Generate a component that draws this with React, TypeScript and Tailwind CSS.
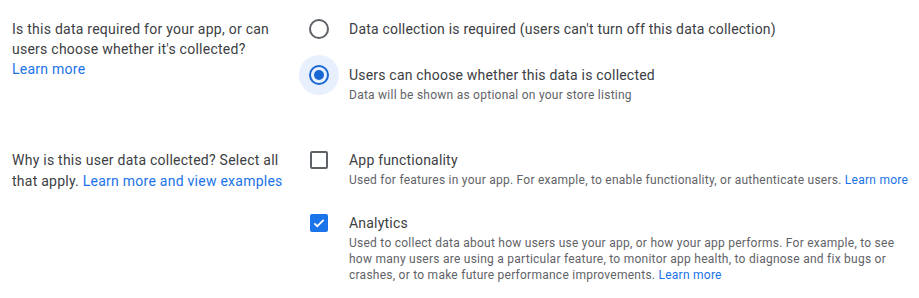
import React from "react";

function Radio({ checked }: { checked?: boolean }) {
  return (
    <div
      className={
        "w-10 h-10 shrink-0 rounded-full flex items-center justify-center " +
        (checked ? "bg-[#e8f0fe]" : "")
      }
    >
      {checked ? (
        <div className="w-5 h-5 rounded-full border-2 border-[#1967d2] flex items-center justify-center">
          <div className="w-[10px] h-[10px] rounded-full bg-[#1967d2]" />
        </div>
      ) : (
        <div className="w-5 h-5 rounded-full border-2 border-[#5f6368]" />
      )}
    </div>
  );
}

function Checkbox({ checked }: { checked?: boolean }) {
  return (
    <div className="w-10 h-10 shrink-0 flex items-center justify-center">
      {checked ? (
        <div className="w-[18px] h-[18px] rounded-[2px] bg-[#1a73e8] flex items-center justify-center">
          <svg width="14" height="14" viewBox="0 0 24 24">
            <path
              d="M4 12.5l5 5L20 6.5"
              fill="none"
              stroke="#fff"
              strokeWidth="3"
            />
          </svg>
        </div>
      ) : (
        <div className="w-[18px] h-[18px] rounded-[2px] border-2 border-[#5f6368]" />
      )}
    </div>
  );
}

const link = "text-[#1a73e8]";

function Option({
  control,
  title,
  sub,
}: {
  control: React.ReactNode;
  title: string;
  sub?: React.ReactNode;
}) {
  return (
    <div className="flex items-start gap-[10px]">
      {control}
      <div className="pt-[10px] w-[562px]">
        <div className="leading-5 tracking-[0.2px]">{title}</div>
        {sub && (
          <div className="mt-[2px] text-[12px] leading-4 tracking-[0.25px] text-[#5f6368]">{sub}</div>
        )}
      </div>
    </div>
  );
}

export default function App() {
  return (
    <div className="w-[919px] h-[298px] bg-white font-['Roboto',sans-serif] text-[14px] text-[#3c4043] pt-[9px]">
      <div className="flex">
        <div className="w-[299px] shrink-0 pl-3 pr-[6px] pt-[10px] leading-5 tracking-[0.25px]">
          <p>Is this data required for your app, or can users choose whether it's collected?</p>
          <a className={link}>Learn more</a>
        </div>
        <div className="flex flex-col gap-[6px]">
          <Option
            control={<Radio />}
            title="Data collection is required (users can't turn off this data collection)"
          />
          <Option
            control={<Radio checked />}
            title="Users can choose whether this data is collected"
            sub="Data will be shown as optional on your store listing"
          />
        </div>
      </div>

      <div className="flex mt-[37px]">
        <div className="w-[299px] shrink-0 pl-3 pr-[6px] pt-[10px] leading-[21px] tracking-[0.25px]">
          <p>
            Why is this user data collected? Select all that apply.{" "}
            <a className={link}>Learn more and view examples</a>
          </p>
        </div>
        <div className="flex flex-col gap-[15px]">
          <Option
            control={<Checkbox />}
            title="App functionality"
            sub={
              <>
                Used for features in your app. For example, to enable functionality, or authenticate users.{" "}
                <a className={link}>Learn more</a>
              </>
            }
          />
          <Option
            control={<Checkbox checked />}
            title="Analytics"
            sub={
              <>
                Used to collect data about how users use your app, or how your app performs. For example, to see how many
                users are using a particular feature, to monitor app health, to diagnose and fix bugs or crashes, or to make
                future performance improvements. <a className={link}>Learn more</a>
              </>
            }
          />
        </div>
      </div>
    </div>
  );
}
